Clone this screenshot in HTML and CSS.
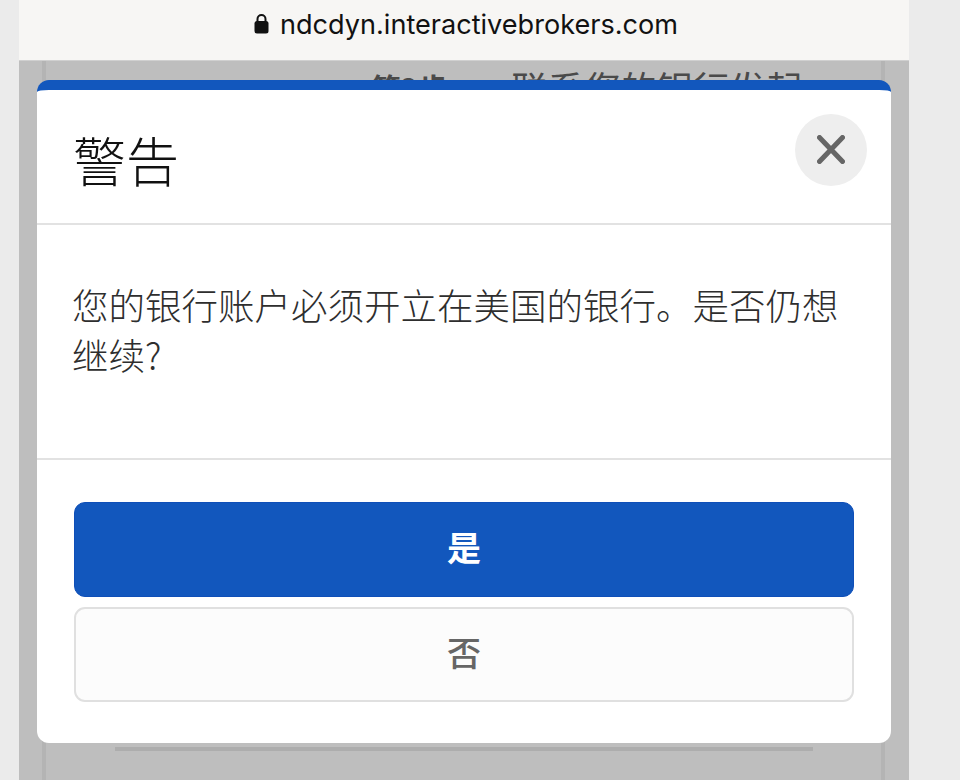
FILE: index.html
```html
<!DOCTYPE html>
<html lang="zh">
<head>
<meta charset="utf-8">
<title>警告</title>
<link rel="stylesheet" href="styles.css">
</head>
<body>
<div class="phone">
  <header class="addressbar">
    <svg class="lock" width="15" height="21" viewBox="0 0 15 21"><path d="M3.500 9V6a4 4 0 0 1 8 0V9" fill="none" stroke="#111" stroke-width="2"/><rect x="0.500" y="8" width="14" height="12.500" rx="2.500" fill="#111"/></svg>
    <span class="url">ndcdyn.interactivebrokers.com</span>
  </header>
  <main class="stage">
    <div class="backdrop">
      <div class="behind-text"><b class="step">第2步</b><span class="step-text">联系您的银行发起</span></div>
      <div class="edge edge-left"></div>
      <div class="edge edge-right"></div>
      <div class="behind-rule"></div>
    </div>
    <section class="dialog">
      <div class="dialog-head">
        <h1 class="title">警告</h1>
        <button class="close" aria-label="关闭">
          <svg width="28" height="29" viewBox="0 0 28 29"><path d="M2.500 2.500 L25.500 26.500 M25.500 2.500 L2.500 26.500" stroke="#666" stroke-width="5" stroke-linecap="round"/></svg>
        </button>
      </div>
      <div class="dialog-body">您的银行账户必须开立在美国的银行。是否仍想继续?</div>
      <div class="dialog-actions">
        <button class="btn btn-yes">是</button>
        <button class="btn btn-no">否</button>
      </div>
    </section>
  </main>
</div>
</body>
</html>
```
FILE: styles.css
```css
* { box-sizing: border-box; }
html, body { margin: 0; height: 780px; overflow: hidden; background: #ebebeb; }
body { font-family: "Noto Sans CJK SC", "Liberation Sans", sans-serif; }
.phone { margin-left: 19px; width: 890px; height: 780px; display: flex; flex-direction: column; }
.addressbar { height: 61px; flex: none; background: #f7f6f4; border-bottom: 1px solid #d0d0d0; display: flex; justify-content: center; align-items: flex-start; gap: 11px; padding: 9px 0 0 4px; }
.lock { margin-top: 4px; }
.url { font-family: Inter, "Liberation Sans", sans-serif; font-size: 27.100px; line-height: 32px; color: #111; font-weight: 400; }
.stage { position: relative; flex: 1; background: #bebebe; padding: 19px 18px 0; overflow: hidden; }
.backdrop { position: absolute; inset: 0; }
.behind-text { position: absolute; left: 352px; top: 3px; font-size: 36.400px; line-height: 46px; color: #4a4a4a; white-space: nowrap; display: flex; gap: 64px; }
.step { font-size: 29.500px; font-weight: 700; line-height: 46px; }
.edge { position: absolute; top: 0; bottom: 0; width: 4px; background: #b4b4b4; }
.edge-left { left: 23px; }
.edge-right { left: 862px; }
.behind-rule { position: absolute; left: 96px; top: 686px; width: 698px; height: 4px; background: #adadad; }
.dialog { position: relative; height: 663px; background: #fff; border-top: 10px solid #1257bd; border-radius: 12px; display: flex; flex-direction: column; overflow: hidden; }
.dialog-head { height: 135px; flex: none; border-bottom: 2px solid #e2e2e2; display: flex; justify-content: space-between; align-items: flex-start; padding: 24px 24px 0 36px; }
.title { margin: 9px 0 0; font-size: 53px; line-height: 72px; font-weight: 300; color: #111; }
.close { width: 72px; height: 72px; border: 0; padding: 0 0 2px; border-radius: 50%; background: #eeeeee; display: flex; align-items: center; justify-content: center; }
.dialog-body { height: 235px; flex: none; border-bottom: 2px solid #e2e2e2; padding: 55px 35px 0; font-size: 36.500px; line-height: 50px; font-weight: 300; color: #2e2e2e; }
.dialog-actions { padding: 42px 37px 0; display: flex; flex-direction: column; gap: 10px; }
.btn { height: 95px; border-radius: 11px; font-family: inherit; font-size: 34px; line-height: 40px; font-weight: 700; padding: 0 0 5px; }
.btn-yes { background: #1257bd; border: 1px solid #0f4fb8; color: #fff; }
.btn-no { background: #fcfcfc; border: 2px solid #e0e0e0; color: #666; font-weight: 500; }
```
